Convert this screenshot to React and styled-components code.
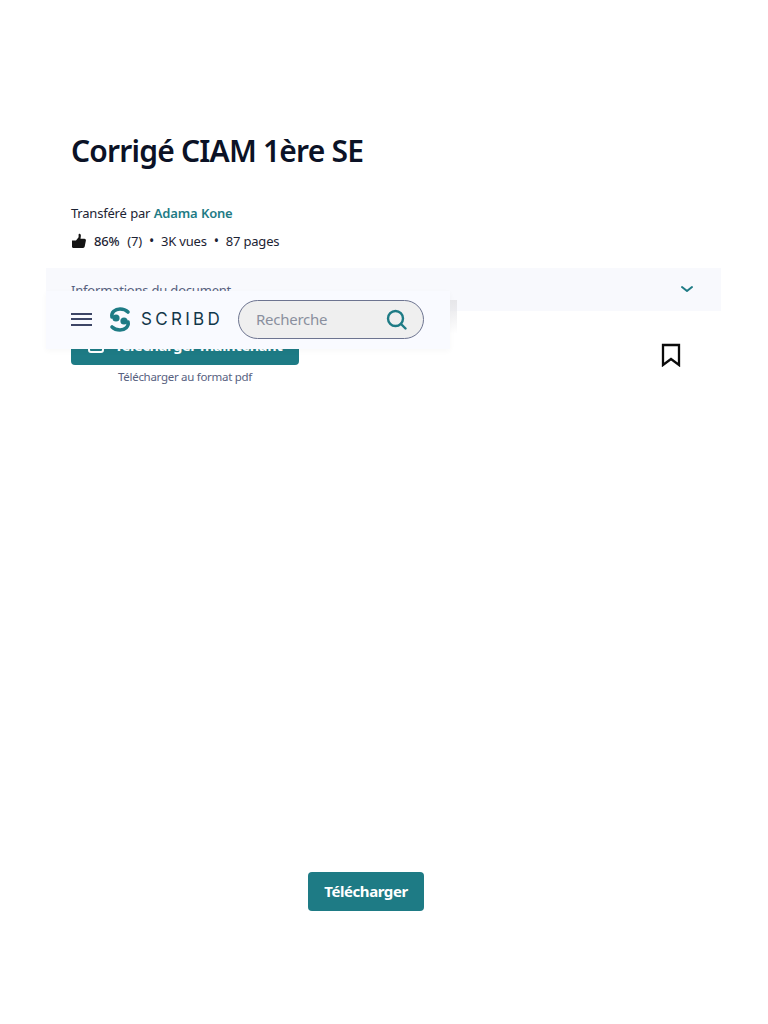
import React from "react";
import styled, { createGlobalStyle } from "styled-components";

const Global = createGlobalStyle`
  html, body { margin: 0; padding: 0; background: #fff; }
  body { font-family: "Noto Sans", "Open Sans", sans-serif; }
`;
const Page = styled.div`
  position: relative;
  width: 768px;
  height: 1024px;
  overflow: hidden;
  box-sizing: border-box;
  padding: 131px 47px 0 46px;
`;
const Title = styled.h1`
  margin: 0 0 0 25px;
  font-size: 30px;
  line-height: 40px;
  font-weight: 600;
  letter-spacing: -0.8px;
  color: #0b1226;
`;
const Byline = styled.div`
  margin: 32px 0 0 25px;
  font-size: 13px;
  line-height: 20px;
  letter-spacing: -0.22px;
  word-spacing: 0.5px;
  color: #1c2333;
`;
const Author = styled.span`
  color: #1e7b85;
  font-weight: 600;
`;
const Stats = styled.div`
  margin: 8px 0 0 25px;
  display: flex;
  align-items: center;
  font-size: 13px;
  line-height: 20px;
  letter-spacing: -0.2px;
  color: #1c2333;
`;
const Thumb = styled.svg`
  width: 16px;
  height: 16px;
  margin-right: 7px;
  fill: #141414;
`;
const Percent = styled.span`
  font-weight: 500;
  margin-right: 8px;
`;
const Dot = styled.span`
  margin: 0 7px;
  font-size: 14px;
`;
const InfoBar = styled.div`
  margin-top: 17px;
  height: 43px;
  background: #f8f9fd;
  display: flex;
  align-items: center;
  justify-content: space-between;
  padding: 0 27px 0 25px;
  font-size: 13px;
  letter-spacing: -0.2px;
  color: #57617f;
`;
const Chevron = styled.svg`
  width: 14px;
  height: 8px;
  margin-top: -2px;
  fill: none;
  stroke: #1e7b85;
  stroke-width: 2;
  stroke-linecap: round;
  stroke-linejoin: round;
`;
const Actions = styled.div`
  margin: 12px 0 0 25px;
  display: flex;
  align-items: flex-start;
`;
const ActionColumn = styled.div`
  width: 228px;
  display: flex;
  flex-direction: column;
  align-items: center;
`;
const MainButton = styled.div`
  width: 100%;
  height: 42px;
  box-sizing: border-box;
  background: #1e7b85;
  border-radius: 4px;
  display: flex;
  align-items: center;
  justify-content: center;
  gap: 11px;
  padding-top: 2px;
  color: #fff;
  font-size: 14.5px;
  font-weight: 700;
  letter-spacing: -0.3px;
`;
const DownloadBox = styled.span`
  width: 16px;
  height: 16px;
  box-sizing: border-box;
  border: 2px solid #fff;
  border-radius: 3px;
`;
const Format = styled.div`
  margin-top: 4px;
  font-size: 11.5px;
  line-height: 16px;
  letter-spacing: -0.29px;
  color: #57617f;
`;
const Bookmark = styled.svg`
  width: 20px;
  height: 24px;
  margin: 20px 0 0 362px;
  fill: none;
  stroke: #0b0b0b;
  stroke-width: 2.3;
`;
const BottomButton = styled.div`
  margin: 487px 0 0 262px;
  width: 116px;
  height: 39px;
  padding-bottom: 1px;
  box-sizing: border-box;
  background: #1e7b85;
  border-radius: 4px;
  display: flex;
  align-items: center;
  justify-content: center;
  color: #fff;
  font-size: 15px;
  font-weight: 700;
  letter-spacing: -0.42px;
`;
const Header = styled.div`
  position: absolute;
  left: 46px;
  top: 291px;
  width: 404px;
  height: 58px;
  background: #f9faff;
  box-shadow: 0 2px 6px rgba(0, 0, 0, 0.03);
  display: flex;
  align-items: center;
  padding: 0 0 2px 25px;
  box-sizing: border-box;
  &::after {
    content: "";
    position: absolute;
    left: 404px;
    top: 9px;
    width: 7px;
    height: 34px;
    background: linear-gradient(#e6e6e9, rgba(255, 255, 255, 0));
  }
`;
const Burger = styled.div`
  width: 21px;
  display: flex;
  flex-direction: column;
  gap: 3.5px;
  margin-right: 16px;
`;
const BurgerLine = styled.span`
  height: 2px;
  background: #3d4566;
`;
const LogoMark = styled.svg`
  width: 24px;
  height: 25px;
  margin-right: 9px;
  fill: none;
`;
const Wordmark = styled.span`
  font-size: 17px;
  font-family: "Inter", sans-serif;
  font-weight: 400;
  letter-spacing: 3.3px;
  color: #12374a;
  width: 97px;
`;
const Search = styled.div`
  width: 186px;
  height: 39px;
  box-sizing: border-box;
  border: 1px solid #6d7490;
  border-radius: 20px;
  background: #efefef;
  display: flex;
  align-items: center;
  justify-content: space-between;
  padding: 0 16px 0 17px;
  color: #8a8f9e;
  font-size: 15px;
  letter-spacing: -0.25px;
`;
const Magnifier = styled.svg`
  width: 21px;
  height: 21px;
  fill: none;
  stroke: #1e7b85;
  stroke-width: 2.4;
  stroke-linecap: round;
`;

export default function App() {
  return (
    <Page>
      <Global />
      <Title>Corrigé CIAM 1ère SE</Title>
      <Byline>
        Transféré par <Author>Adama Kone</Author>
      </Byline>
      <Stats>
        <Thumb viewBox="0 0 16 16">
          <path d="M1 7.5h4l2.6-3.2V1.6C7.6.9 8.2.6 8.8.8c1 .4 1.2 1.6 1 2.6L9.5 5.8h3.9c1 0 1.7.9 1.5 1.8l-1.2 6c-.2.8-.8 1.4-1.6 1.4H2.2C1.5 15 1 14.5 1 13.8V7.5z" />
        </Thumb>
        <Percent>86%</Percent>
        (7)
        <Dot>•</Dot>
        3K vues
        <Dot>•</Dot>
        87 pages
      </Stats>
      <InfoBar>
        Informations du document
        <Chevron viewBox="0 0 14 8">
          <path d="M2 2l5 4 5-4" />
        </Chevron>
      </InfoBar>
      <Actions>
        <ActionColumn>
          <MainButton>
            <DownloadBox />
            Télécharger maintenant
          </MainButton>
          <Format>Télécharger au format pdf</Format>
        </ActionColumn>
        <Bookmark viewBox="0 0 20 24">
          <path d="M2 2h16v20l-8-6-8 6z" />
        </Bookmark>
      </Actions>
      <BottomButton>Télécharger</BottomButton>
      <Header>
        <Burger>
          <BurgerLine />
          <BurgerLine />
          <BurgerLine />
        </Burger>
        <LogoMark viewBox="0 0 24 25">
          <path d="M4 10C3 5.5 7 2 12 2c3 0 6 1 8 3" stroke="#1e7b85" strokeWidth="3.6" strokeLinecap="round" />
          <path d="M20 15c1 4.5-3 8-8 8-3 0-6-1-8-3" stroke="#1e7b85" strokeWidth="3.6" strokeLinecap="round" />
          <circle cx="8" cy="11" r="3.6" fill="#1e7b85" />
          <circle cx="16" cy="14" r="3.6" fill="#1e7b85" />
        </LogoMark>
        <Wordmark>SCRIBD</Wordmark>
        <Search>
          Recherche
          <Magnifier viewBox="0 0 21 21">
            <circle cx="9.5" cy="9.5" r="7.5" />
            <path d="M15 15l4.5 4.5" />
          </Magnifier>
        </Search>
      </Header>
    </Page>
  );
}
